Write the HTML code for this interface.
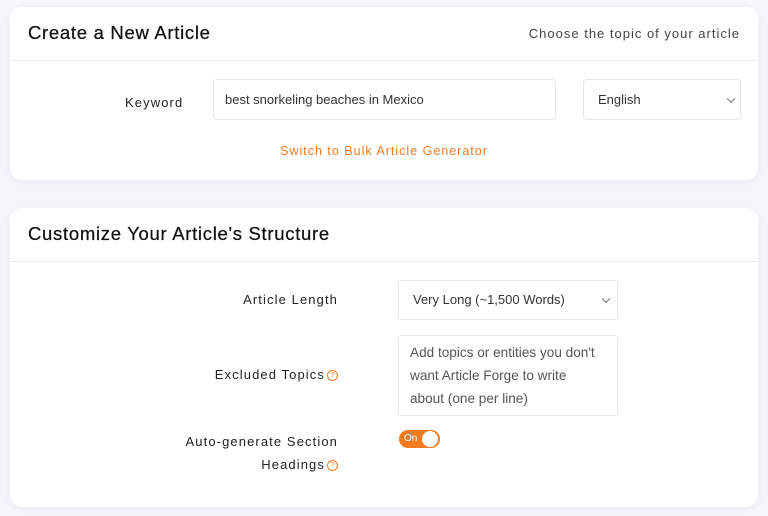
<!DOCTYPE html>
<html><head><style>
body{margin:0;width:768px;height:516px;background:#f5f6fa;font-family:"Liberation Sans",sans-serif;position:relative;overflow:hidden}
.card{position:absolute;left:10px;width:748px;background:#fff;border-radius:12px;box-shadow:0 2px 8px rgba(0,0,0,.05)}
.hd{height:53px;border-bottom:1px solid #ececf0;position:relative}
.t{position:absolute;left:18px;top:15px;font-size:18.5px;color:#111;letter-spacing:.7px;-webkit-text-stroke:.25px #111}
.abs{position:absolute}
.lbl{font-size:13px;color:#222;letter-spacing:1.1px;text-align:right}
.box{position:absolute;border:1px solid #e6e6ea;border-radius:4px;background:#fff;font-size:13px;color:#333;box-sizing:border-box}
.chev{position:absolute;right:6px;top:50%;width:5px;height:5px;border-right:1px solid #666;border-bottom:1px solid #666;transform:translateY(-70%) rotate(45deg)}
.q{display:inline-block;width:9px;height:9px;border:1px solid #f47b20;border-radius:50%;font-size:7px;line-height:9px;text-align:center;color:#f47b20;vertical-align:2px;margin-left:2px;letter-spacing:0}
</style></head><body>
<div class="card" style="top:7px;height:173px">
 <div class="hd"><div class="t">Create a New Article</div>
 <div class="abs" style="right:18px;top:19px;font-size:13px;color:#444;letter-spacing:1px">Choose the topic of your article</div></div>
 <div class="abs lbl" style="left:115px;top:88px">Keyword</div>
 <div class="box" style="left:203px;top:72px;width:343px;height:41px;padding:12px 11px">best snorkeling beaches in Mexico</div>
 <div class="box" style="left:573px;top:72px;width:158px;height:41px;padding:12px 14px">English<span class="chev"></span></div>
 <div class="abs" style="left:0;width:748px;text-align:center;top:137px;font-size:12.5px;color:#f47b20;letter-spacing:1px">Switch to Bulk Article Generator</div>
</div>
<div class="card" style="top:208px;height:299px">
 <div class="hd"><div class="t" style="top:15px">Customize Your Article's Structure</div></div>
 <div class="abs lbl" style="right:420px;top:84px">Article Length</div>
 <div class="box" style="left:388px;top:72px;width:220px;height:40px;padding:11px 14px">Very Long (~1,500 Words)<span class="chev" style="right:8px"></span></div>
 <div class="abs lbl" style="right:420px;top:159px">Excluded Topics<span class="q">?</span></div>
 <div class="box" style="left:388px;top:127px;width:220px;height:81px;padding:5px 20px 5px 11px;color:#555;line-height:23px;font-size:13.6px">Add topics or entities you don't want Article Forge to write about (one per line)</div>
 <div class="abs lbl" style="right:420px;top:222px;line-height:23px">Auto-generate Section<br>Headings<span class="q">?</span></div>
 <div class="abs" style="left:389px;top:222px;width:41px;height:18px;border-radius:9px;background:#f47b20">
  <span class="abs" style="left:5px;top:3px;font-size:10px;color:#fff">On</span>
  <span class="abs" style="right:2px;top:1px;width:16px;height:16px;border-radius:50%;background:#fff"></span></div>
</div>
</body></html>
